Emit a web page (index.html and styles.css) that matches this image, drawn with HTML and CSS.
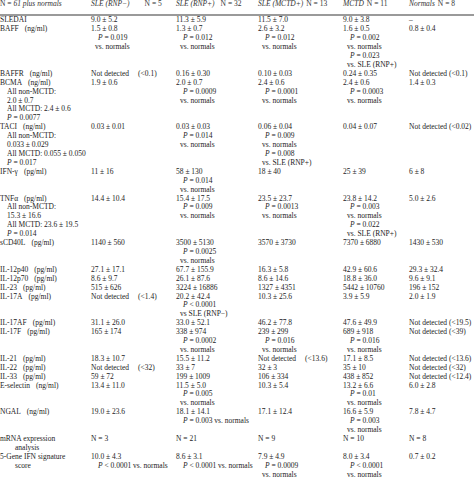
FILE: index.html
```html
<!DOCTYPE html>
<html>
<head>
<meta charset="utf-8">
<link rel="stylesheet" href="styles.css">
</head>
<body>
<div class="wrap">
<table class="data">
<colgroup>
<col class="c1"><col class="c2"><col class="c3"><col class="c4"><col class="c5"><col class="c6">
</colgroup>
<thead>
<tr>
<th>N = <i>61 plus normals</i></th>
<th><i>SLE (RNP−)</i><span class="n1">N = 5</span></th>
<th><i>SLE (RNP+)</i><span class="n2">N = 32</span></th>
<th><i>SLE (MCTD+)</i><span class="n3">N = 13</span></th>
<th><i>MCTD</i><span class="n3">N = 11</span></th>
<th><i>Normals</i><span class="n3">N = 8</span></th>
</tr>
</thead>
<tbody>
<tr><td>SLEDAI</td><td>9.0 ± 5.2</td><td>11.3 ± 5.9</td><td>11.5 ± 7.0</td><td>9.0 ± 3.8</td><td>–</td></tr>
<tr>
<td>BAFF<span class="u">(ng/ml)</span></td>
<td><div>1.5 ± 0.8</div><div class="p"><i>P</i> = 0.019</div><div class="vs">vs. normals</div></td>
<td><div>1.3 ± 0.7</div><div class="p"><i>P</i> = 0.012</div><div class="vs">vs. normals</div></td>
<td><div>2.6 ± 3.2</div><div class="p"><i>P</i> = 0.012</div><div class="vs">vs. normals</div></td>
<td><div>1.6 ± 0.5</div><div class="p"><i>P</i> = 0.002</div><div class="vs">vs. normals</div><div class="p"><i>P</i> = 0.023</div><div class="vs">vs. SLE (RNP+)</div></td>
<td>0.8 ± 0.4</td>
</tr>
<tr>
<td>BAFFR<span class="u">(ng/ml)</span></td>
<td>Not detected<span class="lim">(&lt;0.1)</span></td>
<td>0.16 ± 0.30</td><td>0.10 ± 0.03</td><td>0.24 ± 0.35</td><td>Not detected (&lt;0.1)</td>
</tr>
<tr>
<td><div>BCMA<span class="u">(ng/ml)</span></div><div class="sub">All non-MCTD:</div><div class="sub">2.0 ± 0.7</div><div class="sub">All MCTD: 2.4 ± 0.6</div><div class="sub"><i>P</i> = 0.0077</div></td>
<td>1.9 ± 0.6</td>
<td><div>2.0 ± 0.7</div><div class="p"><i>P</i> = 0.0009</div><div class="vs">vs. normals</div></td>
<td><div>2.4 ± 0.6</div><div class="p"><i>P</i> = 0.0001</div><div class="vs">vs. normals</div></td>
<td><div>2.4 ± 0.6</div><div class="p"><i>P</i> = 0.0003</div><div class="vs">vs. normals</div></td>
<td>1.4 ± 0.3</td>
</tr>
<tr>
<td><div>TACI<span class="u">(ng/ml)</span></div><div class="sub">All non-MCTD:</div><div class="sub">0.033 ± 0.029</div><div class="sub">All MCTD: 0.055 ± 0.050</div><div class="sub"><i>P</i> = 0.017</div></td>
<td>0.03 ± 0.01</td>
<td><div>0.03 ± 0.03</div><div class="p"><i>P</i> = 0.014</div><div class="vs">vs. normals</div></td>
<td><div>0.06 ± 0.04</div><div class="p"><i>P</i> = 0.009</div><div class="vs">vs. normals</div><div class="p"><i>P</i> = 0.008</div><div class="vs">vs. SLE (RNP+)</div></td>
<td>0.04 ± 0.07</td>
<td>Not detected (&lt;0.02)</td>
</tr>
<tr>
<td>IFN-γ<span class="u">(pg/ml)</span></td>
<td>11 ± 16</td>
<td><div>58 ± 130</div><div class="p"><i>P</i> = 0.014</div><div class="vs">vs. normals</div></td>
<td>18 ± 40</td><td>25 ± 39</td><td>6 ± 8</td>
</tr>
<tr>
<td><div>TNFα<span class="u">(pg/ml)</span></div><div class="sub">All non-MCTD:</div><div class="sub">15.3 ± 16.6</div><div class="sub">All MCTD: 23.6 ± 19.5</div><div class="sub"><i>P</i> = 0.014</div></td>
<td>14.4 ± 10.4</td>
<td><div>15.4 ± 17.5</div><div class="p"><i>P</i> = 0.009</div><div class="vs">vs. normals</div></td>
<td><div>23.5 ± 23.7</div><div class="p"><i>P</i> = 0.0013</div><div class="vs">vs. normals</div></td>
<td><div>23.8 ± 14.2</div><div class="p"><i>P</i> = 0.003</div><div class="vs">vs. normals</div><div class="p"><i>P</i> = 0.022</div><div class="vs">vs. SLE (RNP+)</div></td>
<td>5.0 ± 2.6</td>
</tr>
<tr>
<td>sCD40L<span class="u">(pg/ml)</span></td>
<td>1140 ± 560</td>
<td><div>3500 ± 5130</div><div class="p"><i>P</i> = 0.0025</div><div class="vs">vs. normals</div></td>
<td>3570 ± 3730</td><td>7370 ± 6880</td><td>1430 ± 530</td>
</tr>
<tr><td>IL-12p40<span class="u">(pg/ml)</span></td><td>27.1 ± 17.1</td><td>67.7 ± 155.9</td><td>16.3 ± 5.8</td><td>42.9 ± 60.6</td><td>29.3 ± 32.4</td></tr>
<tr><td>IL-12p70<span class="u">(pg/ml)</span></td><td>8.6 ± 9.7</td><td>26.1 ± 87.6</td><td>8.6 ± 14.6</td><td>18.8 ± 36.0</td><td>9.6 ± 9.1</td></tr>
<tr><td>IL-23<span class="u">(pg/ml)</span></td><td>515 ± 626</td><td>3224 ± 16886</td><td>1327 ± 4351</td><td>5442 ± 10760</td><td>196 ± 152</td></tr>
<tr>
<td>IL-17A<span class="u">(pg/ml)</span></td>
<td>Not detected<span class="lim">(&lt;1.4)</span></td>
<td><div>20.2 ± 42.4</div><div class="p"><i>P</i> &lt; 0.0001</div><div class="vs">vs SLE (RNP−)</div></td>
<td>10.3 ± 25.6</td><td>3.9 ± 5.9</td><td>2.0 ± 1.9</td>
</tr>
<tr><td>IL-17AF<span class="u">(pg/ml)</span></td><td>31.1 ± 26.0</td><td>33.0 ± 52.1</td><td>46.2 ± 77.8</td><td>47.6 ± 49.9</td><td>Not detected (&lt;19.5)</td></tr>
<tr>
<td>IL-17F<span class="u">(pg/ml)</span></td>
<td>165 ± 174</td>
<td><div>338 ± 974</div><div class="p"><i>P</i> = 0.0002</div><div class="vs">vs. normals</div></td>
<td><div>239 ± 299</div><div class="p"><i>P</i> = 0.016</div><div class="vs">vs. normals</div></td>
<td><div>689 ± 918</div><div class="p"><i>P</i> = 0.016</div><div class="vs">vs. normals</div></td>
<td>Not detected (&lt;39)</td>
</tr>
<tr><td>IL-21<span class="u">(pg/ml)</span></td><td>18.3 ± 10.7</td><td>15.5 ± 11.2</td><td>Not detected<span class="lim">(&lt;13.6)</span></td><td>17.1 ± 8.5</td><td>Not detected (&lt;13.6)</td></tr>
<tr><td>IL-22<span class="u">(pg/ml)</span></td><td>Not detected<span class="lim">(&lt;32)</span></td><td>33 ± 7</td><td>32 ± 3</td><td>35 ± 10</td><td>Not detected (&lt;32)</td></tr>
<tr><td>IL-33<span class="u">(pg/ml)</span></td><td>59 ± 72</td><td>199 ± 1009</td><td>106 ± 334</td><td>438 ± 852</td><td>Not detected (&lt;12.4)</td></tr>
<tr>
<td>E-selectin<span class="u">(ng/ml)</span></td>
<td>13.4 ± 11.0</td>
<td><div>11.5 ± 5.0</div><div class="p"><i>P</i> = 0.005</div><div class="vs">vs. normals</div></td>
<td>10.3 ± 5.4</td>
<td><div>13.2 ± 6.6</div><div class="p"><i>P</i> = 0.01</div><div class="vs">vs. normals</div></td>
<td>6.0 ± 2.8</td>
</tr>
<tr>
<td>NGAL<span class="u">(ng/ml)</span></td>
<td>19.0 ± 23.6</td>
<td><div>18.1 ± 14.1</div><div class="p"><i>P</i> = 0.003 vs. normals</div></td>
<td>17.1 ± 12.4</td>
<td><div>16.6 ± 5.9</div><div class="p"><i>P</i> = 0.003</div><div class="vs">vs. normals</div></td>
<td>7.8 ± 4.7</td>
</tr>
<tr>
<td><div>mRNA expression</div><div class="hang">analysis</div></td>
<td>N = 3</td><td>N = 21</td><td>N = 9</td><td>N = 10</td><td>N = 8</td>
</tr>
<tr>
<td><div>5-Gene IFN signature</div><div class="hang">score</div></td>
<td><div>10.0 ± 4.3</div><div class="p"><i>P</i> &lt; 0.0001 vs. normals</div></td>
<td><div>8.6 ± 3.1</div><div class="p"><i>P</i> &lt; 0.0001 vs. normals</div></td>
<td><div>7.9 ± 4.9</div><div class="p"><i>P</i> = 0.0009</div><div class="vs">vs. normals</div></td>
<td><div>8.0 ± 3.4</div><div class="p"><i>P</i> &lt; 0.0001</div><div class="vs">vs. normals</div></td>
<td>0.7 ± 0.2</td>
</tr>
</tbody>
</table>
</div>
</body>
</html>
```

FILE: styles.css
```css
html, body {
  margin: 0;
  padding: 0;
  background: #ffffff;
}
body {
  width: 474px;
  height: 479px;
  overflow: hidden;
  font-family: "Liberation Serif", "Times New Roman", serif;
  font-size: 7.5px;
  line-height: 8.9px;
  color: #1c1c1c;
}
.wrap {
  margin-left: 0;
}
.data {
  table-layout: fixed;
  width: 518px;
  border-collapse: separate;
  border-spacing: 0;
}
.c1 { width: 91px; }
.c2 { width: 85px; }
.c3 { width: 82px; }
.c4 { width: 85px; }
.c5 { width: 66px; }
.c6 { width: 109px; }
th, td {
  padding: 0;
  text-align: left;
  vertical-align: top;
  white-space: nowrap;
  font-weight: normal;
}
th {
  padding-bottom: 5.5px;
  border-bottom: 2px solid #9a9a9a;
  color: #333;
}
.n1 { margin-left: 15px; }
.n2 { margin-left: 6px; }
.n3 { margin-left: 3px; }
.u { margin-left: 6px; }
.lim { margin-left: 9px; }
.p { padding-left: 7px; }
.vs { padding-left: 4px; }
.sub { padding-left: 7px; }
.hang { padding-left: 15px; }
```
